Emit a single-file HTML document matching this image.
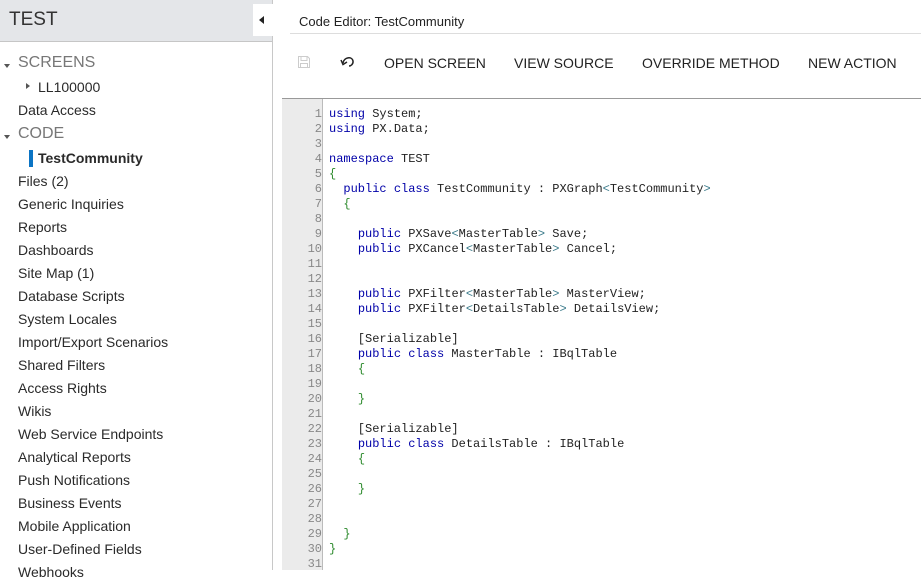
<!DOCTYPE html>
<html><head><meta charset="utf-8"><style>
*{margin:0;padding:0;box-sizing:border-box}
body{width:921px;height:570px;overflow:hidden;background:#fff;font-family:"Liberation Sans",Arial,sans-serif;color:#222;position:relative}
#side{position:absolute;left:0;top:0;width:273px;height:570px;border-right:1px solid #c8c8c8;background:#fff}
#hdr{height:42px;background:#e4e6e9;border-bottom:1px solid #c6c6c6;position:relative}
#hdr span{position:absolute;left:9px;top:9px;font-size:19px;color:#333}
#col{position:absolute;left:253px;top:4px;width:20px;height:32px;background:#fff}
#col:after{content:"";position:absolute;left:6px;top:12px;border-right:5px solid #222;border-top:4px solid transparent;border-bottom:4px solid transparent}
.it{position:absolute;left:18px;font-size:14px;color:#2a2a2a;white-space:nowrap}
.sec{color:#777;font-size:16px;left:18px}
.arr{position:absolute;left:4px;border-top:4px solid #555;border-left:3.5px solid transparent;border-right:3.5px solid transparent}
#main{position:absolute;left:282px;top:0;right:0;height:570px}
#title{position:absolute;left:17px;top:14px;font-size:13px;color:#222}
#tl{position:absolute;left:8px;right:0;top:33px;border-top:1px solid #ddd}
.btn{position:absolute;top:55px;font-size:14px;color:#222}
#ed{position:absolute;left:0;right:0;top:98px;bottom:0;border-top:1px solid #999}
#gut{position:absolute;left:0;top:0;width:41px;bottom:0;background:#ebebeb;border-right:1px solid #bbb}
pre{font-family:"Liberation Mono","DejaVu Sans Mono",monospace;font-size:12px;line-height:15px;position:absolute;top:8px}
#nums{right:0;width:35px;text-align:right;color:#888}
#code{left:47px;color:#222}
.k{color:#0000a8}.g{color:#3a7a8a}.b{color:#2c8a2c}
</style></head><body>
<div id="side">
<div id="hdr"><span>TEST</span><div id="col"></div></div>
<div class="arr" style="top:64px"></div><div class="it sec" style="top:54px">SCREENS</div>
<div style="position:absolute;left:26px;top:83px;border-left:4px solid #555;border-top:3.5px solid transparent;border-bottom:3.5px solid transparent"></div>
<div class="it" style="left:38px;top:79px">LL100000</div>
<div class="it" style="top:102px">Data Access</div>
<div class="arr" style="top:135px"></div><div class="it sec" style="top:125px">CODE</div>
<div style="position:absolute;left:29px;top:150px;width:4px;height:17px;background:#0b74c4"></div>
<div class="it" style="left:38px;top:150px;font-weight:bold">TestCommunity</div>
<div class="it" style="top:173px">Files (2)</div>
<div class="it" style="top:196px">Generic Inquiries</div>
<div class="it" style="top:219px">Reports</div>
<div class="it" style="top:242px">Dashboards</div>
<div class="it" style="top:265px">Site Map (1)</div>
<div class="it" style="top:288px">Database Scripts</div>
<div class="it" style="top:311px">System Locales</div>
<div class="it" style="top:334px">Import/Export Scenarios</div>
<div class="it" style="top:357px">Shared Filters</div>
<div class="it" style="top:380px">Access Rights</div>
<div class="it" style="top:403px">Wikis</div>
<div class="it" style="top:426px">Web Service Endpoints</div>
<div class="it" style="top:449px">Analytical Reports</div>
<div class="it" style="top:472px">Push Notifications</div>
<div class="it" style="top:495px">Business Events</div>
<div class="it" style="top:518px">Mobile Application</div>
<div class="it" style="top:541px">User-Defined Fields</div>
<div class="it" style="top:564px">Webhooks</div>
</div>
<div id="main">
<div id="title">Code Editor: TestCommunity</div>
<div id="tl"></div>
<svg style="position:absolute;left:15px;top:55px" width="14" height="14" viewBox="0 0 14 14"><path d="M1.5 1.5h9l2 2v9h-11z M4 1.5v4h6v-4 M3.5 12.5v-4h7v4" fill="none" stroke="#ccc" stroke-width="1"/></svg>
<svg style="position:absolute;left:58px;top:54px" width="16" height="14" viewBox="0 0 16 14"><path d="M3 9 C4 3 12 2 13 7 C13.5 10 11 12 9 12" fill="none" stroke="#222" stroke-width="1.5"/><path d="M1 6 L3 10.5 L7 8" fill="none" stroke="#222" stroke-width="1.5"/></svg>
<div class="btn" style="left:102px">OPEN SCREEN</div>
<div class="btn" style="left:232px">VIEW SOURCE</div>
<div class="btn" style="left:360px">OVERRIDE METHOD</div>
<div class="btn" style="left:526px">NEW ACTION</div>
<div id="ed">
<div id="gut"><pre id="nums">1
2
3
4
5
6
7
8
9
10
11
12
13
14
15
16
17
18
19
20
21
22
23
24
25
26
27
28
29
30
31</pre></div>
<pre id="code"><span class="k">using</span> System;
<span class="k">using</span> PX.Data;

<span class="k">namespace</span> TEST
<span class="b">{</span>
  <span class="k">public class</span> TestCommunity : PXGraph<span class="g">&lt;</span>TestCommunity<span class="g">&gt;</span>
  <span class="b">{</span>

    <span class="k">public</span> PXSave<span class="g">&lt;</span>MasterTable<span class="g">&gt;</span> Save;
    <span class="k">public</span> PXCancel<span class="g">&lt;</span>MasterTable<span class="g">&gt;</span> Cancel;


    <span class="k">public</span> PXFilter<span class="g">&lt;</span>MasterTable<span class="g">&gt;</span> MasterView;
    <span class="k">public</span> PXFilter<span class="g">&lt;</span>DetailsTable<span class="g">&gt;</span> DetailsView;

    [Serializable]
    <span class="k">public class</span> MasterTable : IBqlTable
    <span class="b">{</span>

    <span class="b">}</span>

    [Serializable]
    <span class="k">public class</span> DetailsTable : IBqlTable
    <span class="b">{</span>

    <span class="b">}</span>


  <span class="b">}</span>
<span class="b">}</span>
</pre>
</div>
</div>
</body></html>
